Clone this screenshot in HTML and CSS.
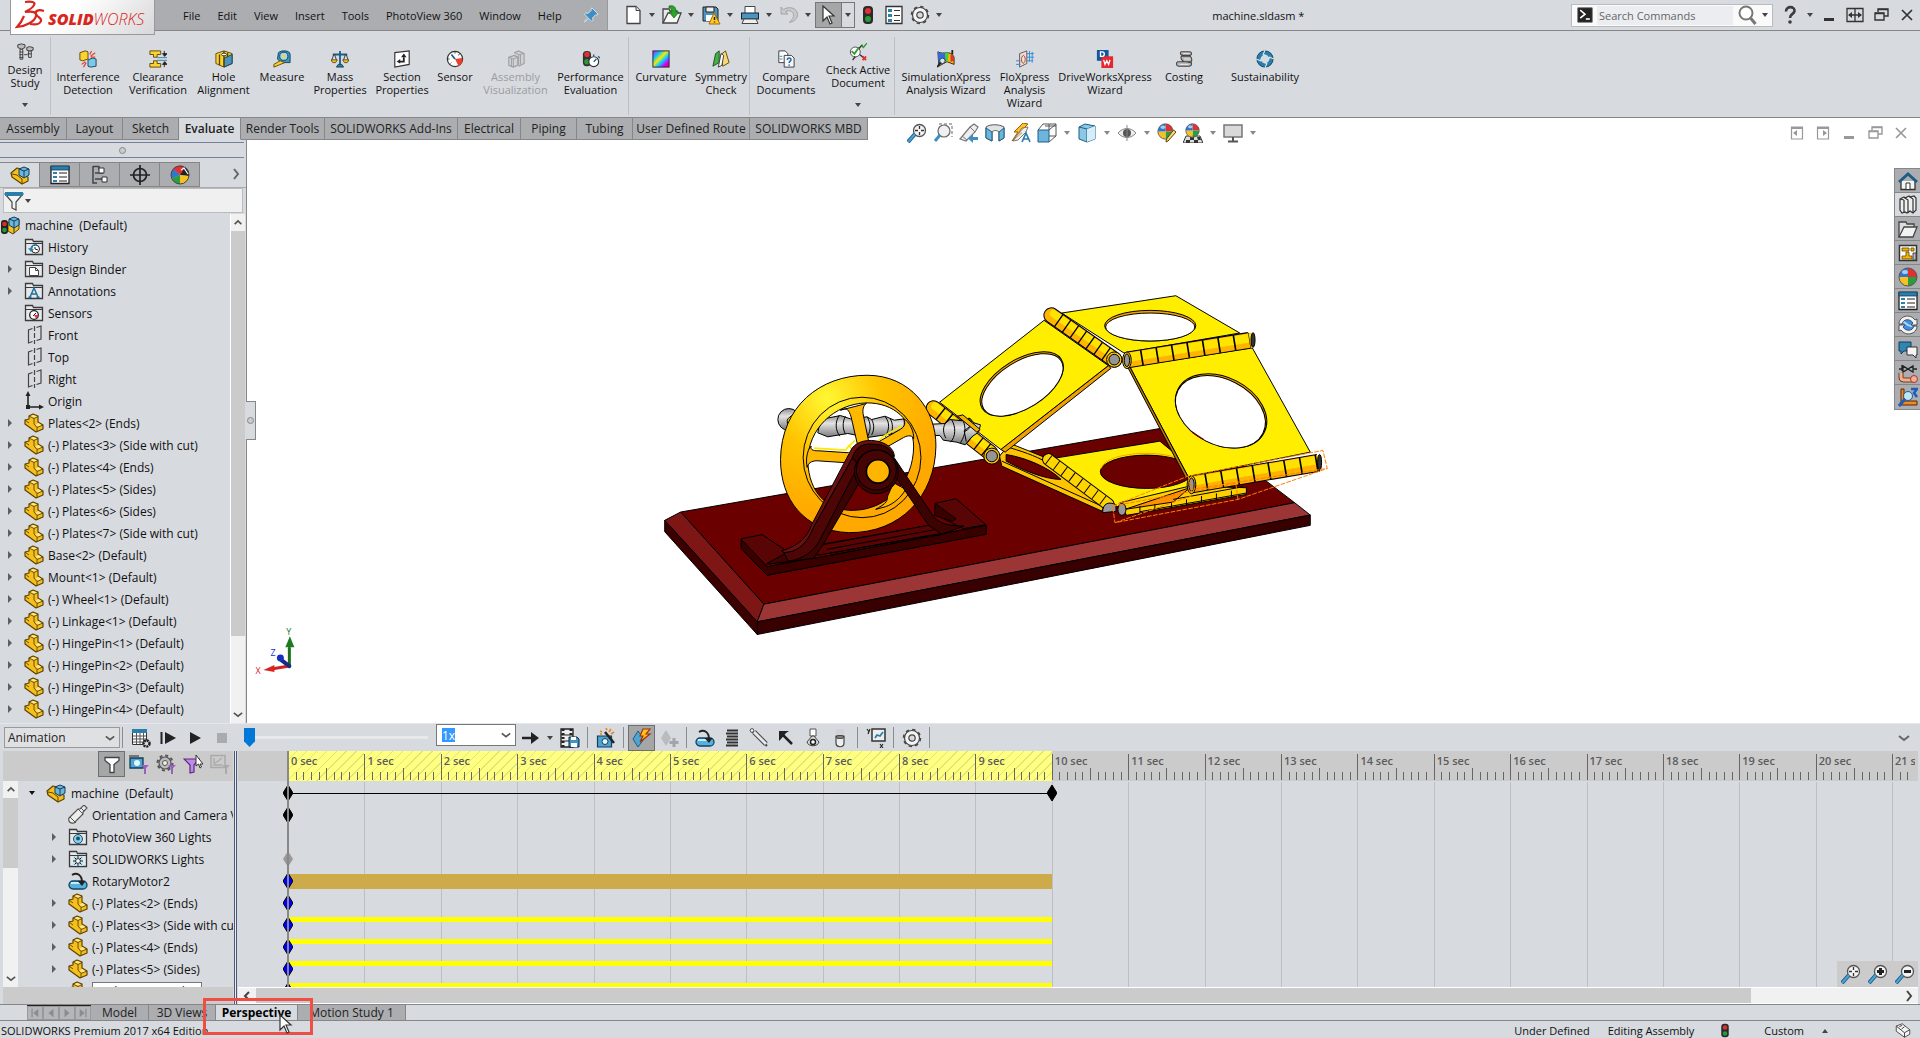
FILE: index.html
```html
<!DOCTYPE html>
<html lang="en">
<head>
  <meta charset="UTF-8">
  <title>machine.sldasm - SOLIDWORKS</title>
  <link rel="stylesheet" href="styles.css">
</head>
<body>

  <!-- Icon sprite -->
  <svg class="sprite" aria-hidden="true">
    <defs>
      <linearGradient id="g-rainbow" x1="0" y1="0" x2="1" y2="1">
        <stop offset="0" stop-color="#e0f"/><stop offset=".25" stop-color="#00c8ff"/><stop offset=".45" stop-color="#ffe600"/>
        <stop offset=".6" stop-color="#00d8ff"/><stop offset=".8" stop-color="#c0f"/><stop offset="1" stop-color="#f03"/>
      </linearGradient>
      <linearGradient id="g-steel" x1="0" y1="0" x2="0" y2="1">
        <stop offset="0" stop-color="#8c8c8c"/><stop offset=".35" stop-color="#e4e4e4"/><stop offset="1" stop-color="#777"/>
      </linearGradient>
      <radialGradient id="g-wheel" cx=".3" cy=".15" r=".75">
        <stop offset="0" stop-color="#fff833"/><stop offset=".45" stop-color="#ffc400"/><stop offset="1" stop-color="#ffa800"/>
      </radialGradient>
    </defs>

    <symbol id="caret" viewBox="0 0 8 8"><path d="M1 2h6L4 6z" fill="currentColor"/></symbol>
    <symbol id="caret-up" viewBox="0 0 8 8"><path d="M1 6h6L4 2z" fill="currentColor"/></symbol>
    <symbol id="tri" viewBox="0 0 8 8"><path d="M2 0l4 4-4 4z" fill="#5e5e5e"/></symbol>
    <symbol id="chev-d" viewBox="0 0 12 12"><path d="M1 4l5 4 5-4" fill="none" stroke="currentColor" stroke-width="2"/></symbol>
    <symbol id="chev-u" viewBox="0 0 12 12"><path d="M2 8l4-4 4 4" fill="none" stroke="currentColor" stroke-width="2"/></symbol>
    <symbol id="chev-r" viewBox="0 0 12 12"><path d="M4 1l4 5-4 5" fill="none" stroke="currentColor" stroke-width="2"/></symbol>
    <symbol id="chev-l" viewBox="0 0 12 12"><path d="M8 2L4 6l4 4" fill="none" stroke="currentColor" stroke-width="2"/></symbol>

    <symbol id="part" viewBox="0 0 20 20">
      <path d="M1 7l4-1V3l4-2 5 2v6l5 3v4l-7 3L1 11z" fill="#f5c01e" stroke="#5e4300" stroke-width="1.200" stroke-linejoin="round"/>
      <path d="M6 3.500L9 2l4 1.500L10.500 5zM11.500 11.500l3-1.500 3.500 2.500-3.500 1.500z" fill="#ffe78a"/>
      <path d="M5 3l5 2.500 4-2M10 5.500v5.500l3 3.500v4M13 14.500l6-2.500M1 7l4 3" fill="none" stroke="#5e4300" stroke-width=".9"/>
    </symbol>
    <symbol id="assembly" viewBox="0 0 20 20">
      <path d="M1 8l6-5 4 1v6l7 2v4l-6 3L2 12z" fill="#f5c01e" stroke="#5e4300" stroke-width="1.200" stroke-linejoin="round"/>
      <path d="M2 9l5 1 5 4v5" fill="none" stroke="#5e4300"/>
      <path d="M9 4l5-2 5 2v6l-5 3-5-3z" fill="#6db5dd" stroke="#123e5a" stroke-linejoin="round"/>
      <path d="M9 4l5 2 5-2M14 6v7" fill="none" stroke="#123e5a"/>
    </symbol>
    <symbol id="machine" viewBox="0 0 20 20">
      <path d="M8 8l4-5 7 2v9l-6 5-5-3z" fill="#f5c01e" stroke="#5e4300"/>
      <path d="M9 4l5-2 5 2v6l-5 3-5-3z" fill="#6db5dd" stroke="#123e5a"/><path d="M9 4l5 2 5-2M14 6v12" fill="none" stroke="#123e5a"/>
      <rect x="1" y="5" width="7" height="14" rx="3" fill="#222"/><circle cx="4.500" cy="9" r="2.300" fill="#e02a2a"/><circle cx="4.500" cy="15" r="2.300" fill="#269a32"/>
    </symbol>
    <symbol id="folder" viewBox="0 0 20 20"><path d="M1.500 17.500v-15h7l1 2h9v13z" fill="#e6e8ea" stroke="#3a3a3a" stroke-width="1.300"/><path d="M1.500 6.500h17" stroke="#3a3a3a"/></symbol>
    <symbol id="history" viewBox="0 0 20 20"><use href="#folder"/><circle cx="11.500" cy="12" r="4" fill="#fff" stroke="#222"/><path d="M11 10v2l3 1" stroke="#222" fill="none"/><path d="M4 11l3 4 3-3z" fill="#2d7fae"/><path d="M7 12c0-3 3-5 6-4" fill="none" stroke="#2d7fae" stroke-width="1.500"/></symbol>
    <symbol id="binder" viewBox="0 0 20 20"><use href="#folder"/><path d="M5.500 8.500h6l3 3v5h-9z" fill="#fff" stroke="#444"/><path d="M11.500 8.500v3h3" fill="none" stroke="#444"/></symbol>
    <symbol id="annot" viewBox="0 0 20 20"><use href="#folder"/><path d="M6 16l4-9 4 9M7.500 13h5M4.500 16.200h3M12.500 16.200h3" fill="none" stroke="#1f6f9f" stroke-width="1.500"/></symbol>
    <symbol id="sensorf" viewBox="0 0 20 20"><use href="#folder"/><circle cx="10" cy="12" r="4.300" fill="#fff" stroke="#222" stroke-width="1.300"/><path d="M9 13l3-3" stroke="#222"/><path d="M10 12h4a4 4 0 01-2 3.500z" fill="#e33"/></symbol>
    <symbol id="plane" viewBox="0 0 20 20"><path d="M8.500 3.500l-4 1.500v13l4-1.500M12.500 2.500l4.500-1.500v13l-4.500 1.500" fill="none" stroke="#444" stroke-width="1.200"/><path d="M10.500 1v18" stroke="#444" stroke-width="1.200" stroke-dasharray="5 2"/></symbol>
    <symbol id="origin" viewBox="0 0 20 20"><path d="M4 4v12h12" fill="none" stroke="#222" stroke-width="1.600"/><path d="M4 0l2.500 5h-5zM20 16l-5-2.500v5z" fill="#222"/><rect x="2" y="14" width="4" height="4" fill="#222"/></symbol>
    <symbol id="camera" viewBox="0 0 20 20"><path d="M1 13l9-9 2 0 4-4 3 3-4 4 0 2-9 9c-4 1-6-2-5-5z" fill="#eee" stroke="#555" stroke-width="1.200"/><path d="M10 4l5 5M2 12l6 6M13 3l3 3" stroke="#555"/></symbol>
    <symbol id="pvlight" viewBox="0 0 20 20"><use href="#folder"/><circle cx="10" cy="12" r="4.500" fill="#8fd0ee" stroke="#1d526f"/><circle cx="10" cy="11.500" r="2" fill="#1d526f"/></symbol>
    <symbol id="swlight" viewBox="0 0 20 20"><use href="#folder"/><path d="M5 7h10v10H5z" fill="#bfe6f8"/><circle cx="10" cy="12" r="2.400" fill="#fff" stroke="#222"/><path d="M10 7v2M10 15v2M5 12h2M13 12h2M6.500 8.500L8 10M12 14l1.500 1.500M13.500 8.500L12 10M8 14l-1.500 1.500" stroke="#222"/></symbol>
    <symbol id="motor" viewBox="0 0 20 20"><rect x="1" y="10" width="18" height="8" rx="4" fill="#58b0dc" stroke="#0f4666" stroke-width="1.300"/><path d="M3 12h9" stroke="#c9ecfb" stroke-width="2"/><path d="M4 4c5-3 10 0 10 7" fill="none" stroke="#222" stroke-width="2"/><path d="M9.500 10h8L14 15z" fill="#222"/></symbol>

    <symbol id="new" viewBox="0 0 20 20"><path d="M4 1.500h9l4 4v13H4z" fill="#fff" stroke="#444" stroke-width="1.300"/><path d="M13 1.500v4h4" fill="#ddd" stroke="#444"/></symbol>
    <symbol id="open" viewBox="0 0 20 20"><path d="M1 18V4h6l1 2h7v4" fill="#e8e8e8" stroke="#444" stroke-width="1.300"/><path d="M1 18l5-10h13l-4 10z" fill="#f7f7f7" stroke="#444" stroke-width="1.300"/><path d="M7 1c5-1 7 1 7 6h3l-5 6-5-6h3c0-3-1-4-3-4z" fill="#2aa52a" stroke="#136a13" stroke-width=".7"/></symbol>
    <symbol id="save" viewBox="0 0 20 20"><path d="M2 2h13l2 2v12H2z" fill="#4b94bf" stroke="#222"/><path d="M5 2h8v5H5z" fill="#eee" stroke="#222"/><path d="M5 10h8v6H5z" fill="#fff"/><path d="M13 8l6 11H8z" fill="#ffc928" stroke="#a66b00"/><path d="M13.500 12v3M13.500 16.500v1" stroke="#222" stroke-width="1.500"/></symbol>
    <symbol id="print" viewBox="0 0 20 20"><path d="M5 8V1.500h10V8" fill="#fff" stroke="#444"/><rect x="1.500" y="8" width="17" height="6" fill="#4b94bf" stroke="#123"/><path d="M4 14h12l2 4.500H2z" fill="#eee" stroke="#444"/></symbol>
    <symbol id="undo" viewBox="0 0 20 20"><path d="M2 2v7h7L6.500 6.500c4-2 9 0 8 5-.5 3-3 4-4 6 5-1 8-4 8-8 0-6-8-9-14-5z" fill="#c8cacc" stroke="#a2a4a6"/></symbol>
    <symbol id="pointer" viewBox="0 0 20 20"><path d="M5 1v15l4-4 3 7 2-1-3-7h5z" fill="#fff" stroke="#333" stroke-width="1.200"/></symbol>
    <symbol id="traffic" viewBox="0 0 20 20"><rect x="5" y="1" width="10" height="18" rx="4" fill="#2a2a2a"/><circle cx="10" cy="6" r="3" fill="#e13030"/><circle cx="10" cy="14" r="3" fill="#279b3a"/></symbol>
    <symbol id="list" viewBox="0 0 20 20"><path d="M2 1.500h16v17H2z" fill="#fff" stroke="#333" stroke-width="1.300"/><path d="M4 4h4v3H4zM4 9h4v3H4zM4 14h4v3H4z" fill="#2f7fae"/><path d="M10 5.500h6M10 10.500h6M10 15.500h6" stroke="#333"/></symbol>
    <symbol id="props" viewBox="0 0 20 20"><path d="M1 1.500h18v17H1z" fill="#fff" stroke="#222" stroke-width="1.300"/><path d="M1 1h18v4H1z" fill="#2c7eaa" stroke="#123e5a" stroke-width=".8"/><path d="M3 7h4v2H3zM3 11h4v2H3zM3 15h4v2H3z" fill="#2f7fae"/><path d="M9 8h8M9 12h8M9 16h8" stroke="#222" stroke-width="1.200"/></symbol>
    <symbol id="gear" viewBox="0 0 20 20"><circle cx="10" cy="10" r="7.500" fill="#f4f4f4" stroke="#444" stroke-width="1.200"/><circle cx="10" cy="10" r="8.500" fill="none" stroke="#444" stroke-width="1.500" stroke-dasharray="3.300 3.370"/><circle cx="10" cy="10" r="3.200" fill="#d7dadf" stroke="#444" stroke-width="1.200"/></symbol>
    <symbol id="pin" viewBox="0 0 20 20"><path d="M11 1l8 8-2 1-1-.5-4 4 .5 3-1.500 1.500L7 14l-5 5-.5-.5L6 13 2 9l1.500-1.500 3 .5 4-4-.5-1z" fill="#3b8dc2" stroke="#e8f2f8"/></symbol>
    <symbol id="lens" viewBox="0 0 20 20"><circle cx="9" cy="8" r="6.500" fill="#fff" stroke="#777" stroke-width="2"/><path d="M13.500 13l5 6" stroke="#777" stroke-width="3"/></symbol>
    <symbol id="prompt" viewBox="0 0 20 20"><path d="M1 1h18v18H1z" fill="#222" stroke="#555"/><path d="M4 4l6 5-6 5" fill="none" stroke="#fff" stroke-width="2"/><path d="M11 15h5" stroke="#fff" stroke-width="2"/></symbol>
    <symbol id="help" viewBox="0 0 20 20"><path d="M6 6.500c0-6 9-5.500 8.500-.5C14.200 9 10 9 10 13" fill="none" stroke="#3c3c3c" stroke-width="2.600"/><circle cx="10" cy="17" r="1.800" fill="#3c3c3c"/></symbol>
    <symbol id="min" viewBox="0 0 20 20"><path d="M5 13h10v3H5z" fill="currentColor"/></symbol>
    <symbol id="fit" viewBox="0 0 20 20"><path d="M2 3.500h16v13H2zM10 3v14M4 10h12" fill="none" stroke="currentColor" stroke-width="1.300"/><path d="M3 10l4-3v6zM17 10l-4-3v6z" fill="currentColor"/></symbol>
    <symbol id="restore" viewBox="0 0 20 20"><path d="M4 8h9v7H4zM7 7V4h10v7h-4" fill="none" stroke="currentColor" stroke-width="1.400"/><path d="M4 8.500h9M7 4.500h10" stroke="currentColor" stroke-width="1.500"/></symbol>
    <symbol id="close" viewBox="0 0 20 20"><path d="M5 5l10 10M15 5L5 15" stroke="currentColor" stroke-width="1.700"/></symbol>
    <symbol id="pane-l" viewBox="0 0 20 20"><path d="M4.500 4v12h11V4z" fill="none" stroke="currentColor" stroke-width="1.200"/><path d="M4 4h12v2H4zM10 7v6l-4-3z" fill="currentColor"/></symbol>
    <symbol id="pane-r" viewBox="0 0 20 20"><path d="M4.500 4v12h11V4z" fill="none" stroke="currentColor" stroke-width="1.200"/><path d="M4 4h12v2H4zM10 7v6l4-3z" fill="currentColor"/></symbol>

    <symbol id="study" viewBox="0 0 20 20"><path d="M2 2l4-1 4 1v3L6 7 2 5zM12 5l3-1 4 1v3l-4 1-3-1z" fill="#bbb" stroke="#333"/><path d="M4.500 7h3v11h-3zM14 9h3v7h-3z" fill="#ddd" stroke="#333"/><path d="M4 10h4M4 13h4M4 16h4M13 12h4M9 13h4" stroke="#333"/></symbol>
    <symbol id="interf" viewBox="0 0 20 20"><path d="M1 3l6-2 3 1v8l-6 2-3-1z" fill="#fbd22e" stroke="#5e4300"/><path d="M10 11l5-2 4 1v8l-6 1-3-1z" fill="#7cc9ec" stroke="#123e5a"/><path d="M12 5l2-4M13 7l5-4M13 8h5M7 13l-4 3M8 14l-3 5" stroke="#e8402c" stroke-width="1.300"/></symbol>
    <symbol id="clear" viewBox="0 0 20 20"><path d="M1 1h12v4H9v3H5V5H1zM5 12h4v3h4v4H1v-4h4z" fill="#fbd22e" stroke="#5e4300"/><path d="M9 8.500h11M9 11.500h11" stroke="#2f7fae"/><path d="M17 1v6M17 13v6M15 4h5l-2.500 3zM15 16h5l-2.500-3z" fill="#222" stroke="#222"/></symbol>
    <symbol id="hole" viewBox="0 0 20 20"><path d="M1 4l9-3 9 3v11l-9 4-9-4z" fill="#fbd22e" stroke="#5e4300"/><path d="M10 9l9-4v10l-9 4z" fill="#4b94bf" stroke="#123e5a"/><path d="M5 5v12M14 3v5M10 1v18" stroke="#5e4300" stroke-width="1.500"/><ellipse cx="10" cy="5" rx="3" ry="1.500" fill="#fff" stroke="#333"/></symbol>
    <symbol id="tape" viewBox="0 0 20 20"><path d="M6 3c3-3 13-3 13 2v9H9L5 10z" fill="#3d93c2" stroke="#123e5a"/><circle cx="12" cy="7" r="4.500" fill="#a9d8ef" stroke="#123e5a"/><circle cx="12" cy="7" r="1.800" fill="#fbd22e"/><path d="M8 12l-7 4v3l12-5z" fill="#fbd22e" stroke="#5e4300"/></symbol>
    <symbol id="scale" viewBox="0 0 20 20"><path d="M10 1v15M2 5h16" stroke="#1c5d87" stroke-width="2"/><path d="M6 19h8l-2-3H8z" fill="#2f7fae" stroke="#123e5a"/><path d="M3 5L1 11M4 5l2 6M16 5l-2 6M17 5l2 6" stroke="#333"/><path d="M0 11h7l-2 3H2zM13 11h7l-2 3h-3z" fill="#fbd22e" stroke="#5e4300"/></symbol>
    <symbol id="section" viewBox="0 0 20 20"><path d="M2 3l16-2v15L2 19z" fill="#fff" stroke="#333" stroke-width="1.300"/><path d="M7 13l5 0V8" fill="none" stroke="#222" stroke-width="2"/><path d="M12 4l3 4h-6zM4 13l4-3v5z" fill="#222"/></symbol>
    <symbol id="gauge" viewBox="0 0 20 20"><circle cx="10" cy="10" r="8.500" fill="#fff" stroke="#333" stroke-width="1.300"/><path d="M10 10l8-1a8 8 0 01-4 9z" fill="#e8402c"/><path d="M10 10L6 5" stroke="#1c5d87" stroke-width="2"/><path d="M10 2v2M2 10h2M5 15l1-1M15 4l-1 2" stroke="#333"/></symbol>
    <symbol id="visual" viewBox="0 0 20 20"><path d="M2 8l6-2 4 2v9l-5 2-5-2zM8 3l5-2 6 3v11l-6 3" fill="#d0d2d4" stroke="#9b9da0" stroke-width="1.200"/><path d="M2 8l5 2v9M7 10l5-2M13 5v12M8 3l5 2 6-1M5 9v9M15 5v11" fill="none" stroke="#9b9da0"/></symbol>
    <symbol id="perf" viewBox="0 0 20 20"><rect x="1" y="1" width="9" height="17" rx="4" fill="#333"/><circle cx="5.500" cy="5" r="3" fill="#e13030"/><circle cx="5.500" cy="13" r="3" fill="#279b3a"/><circle cx="13" cy="13" r="5.500" fill="#fff" stroke="#333" stroke-width="1.300"/><path d="M13 13l3-3M13 7V5M18 7l2 2" stroke="#1c5d87" stroke-width="1.500"/></symbol>
    <symbol id="curv" viewBox="0 0 20 20"><rect x="1" y="1" width="18" height="18" fill="url(#g-rainbow)" stroke="#223"/></symbol>
    <symbol id="symm" viewBox="0 0 20 20"><path d="M1 18l3-14 4-3v13z" fill="#47b047" stroke="#1a501a"/><path d="M10 5l5-4 4 13-7 4z" fill="#f5d978" stroke="#5e4300"/><path d="M7 19l3-15 3 2-2 11z" fill="#fff" stroke="#333"/></symbol>
    <symbol id="compare" viewBox="0 0 20 20"><path d="M2 1h7l3 3v10H2z" fill="#fff" stroke="#333"/><path d="M8 6h8l3 3v10H8z" fill="#f6f6f6" stroke="#333"/><path d="M3 7h3M3 10h3" stroke="#2f7fae"/><path d="M11.500 11c0-3 4.500-2.500 4 0-.2 1.500-2 1.500-2 3.500M13.500 16v1.500" fill="none" stroke="#1c6ea4" stroke-width="1.700"/></symbol>
    <symbol id="check" viewBox="0 0 20 20"><circle cx="7" cy="10" r="5.500" fill="#fff" stroke="#444"/><path d="M3 9l3 3 5-7" fill="none" stroke="#2b9d2b" stroke-width="2"/><path d="M11 6l4-4M12 13l4 3M7 15l-3 4" stroke="#333" stroke-width="1.500"/><path d="M14 3l2 2 4-5" fill="none" stroke="#2b9d2b" stroke-width="1.500"/><path d="M15 15l4 4M19 15l-4 4" stroke="#e13030" stroke-width="2"/></symbol>
    <symbol id="simx" viewBox="0 0 20 20"><path d="M1 2c6 4 14-3 18 6v8l-8-3-9 5z" fill="#ffb400" stroke="#222"/><path d="M1 2c5 3 6 1 8 1l1 9-8 5z" fill="#2e6de0"/><path d="M9 3h4l-1 10-2-1z" fill="#3fd13f"/><path d="M15 5c3 1 4 4 4 7l-4 1z" fill="#e13030"/><circle cx="6" cy="12" r="3" fill="#cfe8f7" stroke="#333"/><path d="M4 14l-4 5M17 0v5" stroke="#222" stroke-width="2"/></symbol>
    <symbol id="flox" viewBox="0 0 20 20"><path d="M4 4l8-3v14l-8 4z" fill="#f3d6d6" stroke="#555"/><path d="M8 6c-3 2-2 8 0 9 3-2 3-8 0-9z" fill="#d7f0c7" stroke="#b33"/><path d="M12 4h8M12 8h8M0 12h5M0 16h5M12 12h7M15 1v12M18 2v12" stroke="#2b8ad6"/></symbol>
    <symbol id="drive" viewBox="0 0 20 20"><path d="M1 0h13v12H1z" fill="#12569e"/><path d="M6 7h13v13H6z" fill="#e8262d"/><path d="M5 2v5h2c3 0 3-5 0-5zM8.500 11l1.500 5 2-4 2 4 1.500-5" fill="none" stroke="#fff" stroke-width="1.500"/></symbol>
    <symbol id="cost" viewBox="0 0 20 20"><path d="M7 2h9c3 0 3 3 1 4h-8C6 6 5 3 7 2zM7 7h9c3 0 3 5 2 6h-7c-4 0-5-5-4-6zM3 13h9l6 1c1 2 0 4-2 4H4c-3 0-3-4-1-5z" fill="#b5b5b5" stroke="#444" stroke-width="1.200"/><path d="M9 4h7M10 10h7M5 16h10" stroke="#eee"/></symbol>
    <symbol id="sust" viewBox="0 0 20 20"><circle cx="10" cy="10" r="7" fill="none" stroke="#2c7eaa" stroke-width="4.500"/><circle cx="10" cy="10" r="9" fill="none" stroke="#174c6a"/><path d="M10 0l-2 5 3 1M20 10l-5-2-1 3M10 20l2-5-3-1M0 10l5 2 1-3" fill="none" stroke="#d7e8f2" stroke-width="1.200"/></symbol>

    <symbol id="zoomfit" viewBox="0 0 20 20"><circle cx="12.500" cy="7.500" r="6" fill="#f4f4f4" stroke="#555" stroke-width="1.300"/><path d="M12.500 3v3M12.500 9v3M8 7.500h3M14 7.500h3" stroke="#333" stroke-width="1.300"/><path d="M8 11l-7 8" stroke="#1d5d85" stroke-width="4"/><path d="M8 11l-7 8" stroke="#4ba3d6" stroke-width="2"/></symbol>
    <symbol id="zoomin" viewBox="0 0 20 20"><circle cx="12.500" cy="7.500" r="6" fill="#f4f4f4" stroke="#555" stroke-width="1.300"/><path d="M12.500 4v7M9 7.500h7" stroke="#222" stroke-width="3"/><path d="M8 11l-7 8" stroke="#1d5d85" stroke-width="4"/><path d="M8 11l-7 8" stroke="#4ba3d6" stroke-width="2"/></symbol>
    <symbol id="zoomout" viewBox="0 0 20 20"><circle cx="12.500" cy="7.500" r="6" fill="#f4f4f4" stroke="#555" stroke-width="1.300"/><path d="M9 7.500h7" stroke="#222" stroke-width="3"/><path d="M8 11l-7 8" stroke="#1d5d85" stroke-width="4"/><path d="M8 11l-7 8" stroke="#4ba3d6" stroke-width="2"/></symbol>
    <symbol id="zoomarea" viewBox="0 0 20 20"><path d="M6 1h13v13" fill="none" stroke="#666" stroke-dasharray="3 2"/><circle cx="11" cy="8" r="6" fill="#f0f0f0" stroke="#666" stroke-width="1.200"/><path d="M7 12l-5 6" stroke="#3e8fc0" stroke-width="3"/></symbol>
    <symbol id="prevview" viewBox="0 0 20 20"><path d="M1 16L11 4l4-3 4 3-3 5L7 18z" fill="#eee" stroke="#777" stroke-width="1.200"/><path d="M11 4l5 5M3 13l5 4" stroke="#777"/><path d="M19 14v3h-5v3l-5-4.500L14 11v3z" fill="#3b8dc2"/></symbol>
    <symbol id="secview" viewBox="0 0 20 20"><path d="M1 4c4-3 13-3 18 0v11l-5 3V9c-2-2-5-2-7 0v9l-6-3z" fill="#dfe3e6" stroke="#555"/><path d="M1 5l6 4v9l-6-3zM19 5l-5 4v9l5-3z" fill="#6db5dd" stroke="#1d5d85"/></symbol>
    <symbol id="dynview" viewBox="0 0 20 20"><path d="M12 0L3 9h4l-6 9 10-8H8l9-9z" fill="#ffc21f" stroke="#a05a00"/><path d="M2 18l9-13 6-1-2 5-8 8z" fill="#e4e4e4" fill-opacity=".6" stroke="#777"/><path d="M11 19l4-9 4 9M12.500 16h5" fill="none" stroke="#2c7eaa" stroke-width="1.700"/></symbol>
    <symbol id="orient" viewBox="0 0 20 20"><path d="M1 7h11v12H1z" fill="#6db5dd" stroke="#1d5d85"/><path d="M1 7l5-6h13v12l-7 6M12 7l7-6M12 13h7M12 1v6M8 3h11" fill="none" stroke="#555"/></symbol>
    <symbol id="style" viewBox="0 0 20 20"><path d="M2 4l6-3 10 2v13l-8 3-8-3z" fill="#8cc8e6" stroke="#1d5d85"/><path d="M2 4l8 2 8-3M10 6v13" fill="none" stroke="#1d5d85"/><path d="M10 6l8-3v13l-8 3z" fill="#d6edf8"/></symbol>
    <symbol id="eye" viewBox="0 0 20 20"><path d="M1 10c5-6 13-6 18 0-5 6-13 6-18 0z" fill="#eee" stroke="#888"/><circle cx="10" cy="10" r="4" fill="#555"/><path d="M10 2v16" stroke="#888"/></symbol>
    <symbol id="ball" viewBox="0 0 20 20"><path d="M10 10V1a9 9 0 019 9z" fill="#e13030"/><path d="M10 10h9a9 9 0 01-9 9z" fill="#2a9d3c"/><path d="M10 10v9a9 9 0 01-9-9z" fill="#f8c21e"/><path d="M10 10H1a9 9 0 019-9z" fill="#2e76d2"/><circle cx="10" cy="10" r="9" fill="none" stroke="#555"/><ellipse cx="7" cy="5" rx="3" ry="2" fill="#fff" fill-opacity=".6"/></symbol>
    <symbol id="display" viewBox="0 0 20 20"><path d="M10 10L3 4a9 9 0 0112-2z" fill="#e13030"/><path d="M10 10l5-8a9 9 0 014 9z" fill="#222"/><path d="M10 10l9 1a9 9 0 01-9 8z" fill="#f8c21e"/><path d="M10 10v9a9 9 0 01-8-6z" fill="#2a9d3c"/><path d="M10 10l-8 3a9 9 0 011-9z" fill="#2e76d2"/><circle cx="10" cy="10" r="9" fill="none" stroke="#444"/><path d="M11 5l3-2 4 6" fill="none" stroke="#fff" stroke-width="1.200"/></symbol>
    <symbol id="appear" viewBox="0 0 20 20"><use href="#ball" width="17" height="17"/><path d="M19 9l-8 9-2 1 .5-3 7-9z" fill="#f5d978" stroke="#5e4300"/></symbol>
    <symbol id="scene" viewBox="0 0 20 20"><path d="M0 20l3-7h14l3 7z" fill="#ddd" stroke="#333"/><path d="M3 17h4v3H3zM11 17h4v3h-4zM14 14h3l1 3h-3zM7 14h4v3H7z" fill="#333"/><use href="#ball" x="2" width="15" height="15"/></symbol>
    <symbol id="monitor" viewBox="0 0 20 20"><path d="M1 2h18v12H1z" fill="#d9d9d9" stroke="#777" stroke-width="1.500"/><path d="M10 14v4M5 18.500h10" stroke="#555" stroke-width="2"/></symbol>

    <symbol id="tree-config" viewBox="0 0 20 20"><path d="M3 1.500h6M3 1v17h4M5 8h8M9 1v4M5 14h8" fill="none" stroke="#444" stroke-width="1.500"/><path d="M9 3h5v5H9zM12 12h5v5h-5z" fill="#fff" stroke="#333"/></symbol>
    <symbol id="target" viewBox="0 0 20 20"><circle cx="10" cy="10" r="6.500" fill="none" stroke="#222" stroke-width="1.700"/><path d="M10 0v20M0 10h20" stroke="#222" stroke-width="1.700"/></symbol>
    <symbol id="funnel" viewBox="0 0 20 20"><path d="M1 3h18l-7 8v8l-4-2v-6z" fill="#f4f4f4" stroke="#444" stroke-width="1.200"/><path d="M1 1h18v4H1z" fill="#2c7eaa"/></symbol>

    <symbol id="home" viewBox="0 0 20 20"><path d="M3 10v8.500h14V10" fill="#f4f4f4" stroke="#333" stroke-width="1.300"/><path d="M8 18v-6h4v6" fill="#fff" stroke="#333"/><path d="M1 11l9-8 9 8" fill="none" stroke="#1d5d85" stroke-width="3"/></symbol>
    <symbol id="books" viewBox="0 0 20 20"><path d="M2 4l4-2 1 1 4-2 1 1 4-1 2 2v12l-3 3-3-2-3 2-2-1-3 1-2-3z" fill="#f0f0f0" stroke="#333" stroke-width="1.200"/><path d="M6 5v13M7 3l3 2v13M12 2l3 2v13M2 4l4 1" fill="none" stroke="#333" stroke-width="1.200"/></symbol>
    <symbol id="openf" viewBox="0 0 20 20"><path d="M1 18V3h7l1 2h7v3" fill="#ddd" stroke="#444" stroke-width="1.300"/><path d="M1 18l5-10h13l-4 10z" fill="#f2f2f2" stroke="#444" stroke-width="1.300"/></symbol>
    <symbol id="palette" viewBox="0 0 20 20"><path d="M1.500 2.500h17v15h-17z" fill="#fff" stroke="#333" stroke-width="1.500"/><path d="M4 5h7v3H4zM13 5h3v3h-3zM8 9h3v4h3v3H4v-3h4z" fill="#f5b400" stroke="#5e4300" stroke-width=".8"/><path d="M15 10h3v7h-3z" fill="#bbb" stroke="#444"/></symbol>
    <symbol id="sync" viewBox="0 0 20 20"><circle cx="10" cy="10" r="7" fill="#3f8de0"/><path d="M4 6c4 1 5 6 10 5" stroke="#a6d8ff" stroke-width="2" fill="none"/><path d="M1 9c0-8 11-11 16-4l2-1v6h-6l2-2C12 3 5 4 4 9zM19 11c0 8-11 11-16 4l-2 1v-6h6l-2 2c3 5 10 4 11-1z" fill="#f2f2f2" stroke="#444" stroke-width=".9"/></symbol>
    <symbol id="chat" viewBox="0 0 20 20"><path d="M1 3h12v9H6l-3 3v-3H1z" fill="#2f86b5" stroke="#123e5a"/><path d="M9 8h10v8h-1v3l-3-3H9z" fill="#f4f4f4" stroke="#333"/></symbol>
    <symbol id="piping" viewBox="0 0 20 20"><path d="M1 6h4M15 6h4M5 3v6l10-6v6zM4 2v6" fill="none" stroke="#222" stroke-width="1.300"/><path d="M3 10v4c0 3 2 3 5 3h8" fill="none" stroke="#7a3b22" stroke-width="5"/><path d="M3 10v4c0 3 2 3 5 3h8" fill="none" stroke="#f0b18d" stroke-width="3"/><circle cx="16" cy="16" r="3.500" fill="#f0b18d" stroke="#a33"/></symbol>
    <symbol id="magmap" viewBox="0 0 20 20"><path d="M3 2h3v12h13v4H3z" fill="#e88b2d" stroke="#5e2300"/><path d="M13 2h6l-3 4 3 4" fill="none" stroke="#1d5db8" stroke-width="2.500"/><circle cx="10" cy="9" r="4.500" fill="#bfe3f7" stroke="#1d5d85"/><path d="M7 12l-6 7" stroke="#1d5db8" stroke-width="3"/></symbol>

    <symbol id="calc" viewBox="0 0 20 20"><path d="M1.500 1.500h14v15h-14z" fill="#fff" stroke="#333"/><path d="M1 1h15v4H1z" fill="#2c7eaa"/><path d="M2 8h13M2 11h13M2 14h13M5.500 5v11M9 5v11M12.500 5v11" stroke="#555"/><circle cx="15.500" cy="15.500" r="3" fill="#d7dadf" stroke="#222" stroke-width="2.500" stroke-dasharray="2 .8"/></symbol>
    <symbol id="playstart" viewBox="0 0 20 20"><path d="M3.500 4v12" stroke="#222" stroke-width="2"/><path d="M7 4l11 6-11 6z" fill="#222"/></symbol>
    <symbol id="play" viewBox="0 0 20 20"><path d="M5 4l11 6-11 6z" fill="#222"/></symbol>
    <symbol id="stop" viewBox="0 0 20 20"><path d="M5 5h10v10H5z" fill="#a9abae"/></symbol>
    <symbol id="arrow" viewBox="0 0 20 20"><path d="M2 10h11" stroke="#222" stroke-width="2.500"/><path d="M11 4l8 6-8 6z" fill="#222"/></symbol>
    <symbol id="film" viewBox="0 0 20 20"><path d="M1 1h12v18H1z" fill="#eee" stroke="#222" stroke-width="1.300"/><path d="M3 1v18M11 1v18" stroke="#222" stroke-width="3" stroke-dasharray="2 2"/><path d="M1 7h12M1 13h12" stroke="#222"/><path d="M9 9h8l2 2v8H9z" fill="#3f94c4" stroke="#123"/><path d="M11 9h5v3h-5zM11 15h6v4h-6z" fill="#fff"/></symbol>
    <symbol id="wizard" viewBox="0 0 20 20"><path d="M1.500 8h14v11h-14z" fill="#4ea4d2" stroke="#123e5a" stroke-width="1.200"/><circle cx="9" cy="13.500" r="3" fill="#e2f4fc" stroke="#123e5a"/><path d="M9 4l9 11" stroke="#222" stroke-width="2.500"/><path d="M4 3l2 1M10 0l1 2M15 1l-2 3M4 6h2M18 4l-3 2" stroke="#e8862c" stroke-width="1.700"/></symbol>
    <symbol id="autokey" viewBox="0 0 20 20"><path d="M6 3l6 8-6 8-5-8z" fill="#4ea4d2" stroke="#1d5d85"/><path d="M11 1h7l-4 5h4L8 14l3-6H8z" fill="#ffc21f" stroke="#a0300a" stroke-width="1.200"/></symbol>
    <symbol id="addkey" viewBox="0 0 20 20"><path d="M7 2l5 8-5 8-5-8z" fill="#b9bbbe"/><path d="M15 10v9M10.500 14.500h9" stroke="#a3a5a8" stroke-width="3"/></symbol>
    <symbol id="spring" viewBox="0 0 20 20"><path d="M5 2.500h11M4 5.500h12M5 8.500h11M4 11.500h12M5 14.500h11M4 17.500h12" stroke="#333" stroke-width="2"/></symbol>
    <symbol id="damper" viewBox="0 0 20 20"><path d="M2 2l6 6M12 12l6 6" stroke="#444" stroke-width="2"/><path d="M5 4l12 12" stroke="#444" stroke-width="5"/><path d="M5 4l12 12" stroke="#e8e8e8" stroke-width="3"/><circle cx="3" cy="2.500" r="1.800" fill="#fff" stroke="#444"/></symbol>
    <symbol id="force" viewBox="0 0 20 20"><path d="M5 5l11 11" stroke="#222" stroke-width="2.500"/><path d="M3 3h10l-3 2-5 6-2 2z" fill="#222"/></symbol>
    <symbol id="contact" viewBox="0 0 20 20"><path d="M7 1h6v7H7z" fill="#fff" stroke="#555"/><path d="M9 8l-5 6c1 5 11 5 12 0l-5-6z" fill="#ddd" stroke="#444"/><circle cx="10" cy="14" r="2.500" fill="#fff" stroke="#222" stroke-width="1.500"/></symbol>
    <symbol id="gravity" viewBox="0 0 20 20"><path d="M6 1h8v6H6z" fill="#c9c9c9" fill-opacity=".5"/><path d="M6 8h8v7c0 5-8 5-8 0z" fill="#eee" stroke="#444" stroke-width="1.200"/><ellipse cx="10" cy="9" rx="4" ry="1.500" fill="#888" stroke="#444"/></symbol>
    <symbol id="plot" viewBox="0 0 20 20"><path d="M6 1h13v12H6z" fill="#eee" stroke="#333" stroke-width="1.500"/><path d="M9 10l2-3 3 1 3-4" stroke="#2c7eaa" stroke-width="1.800" fill="none"/><path d="M1 1l2 3M4 1L2 6M14 16l3 4M17 16l-3 4" stroke="#222" stroke-width="1.100"/></symbol>
    <symbol id="funnel-w" viewBox="0 0 20 20"><path d="M3 3.500h14v3l-5 4v8H8v-8l-5-4z" fill="#fff" stroke="#444" stroke-width="1.300"/></symbol>
    <symbol id="f-anim" viewBox="0 0 20 20"><path d="M1 4h13v10H1z" fill="#4ea4d2" stroke="#123e5a" stroke-width="1.300"/><path d="M0 2h10" stroke="#222"/><circle cx="8" cy="9" r="3" fill="#e2f4fc"/><path d="M12 11h8l-3 3v6h-2v-6z" fill="#9a5fc0"/></symbol>
    <symbol id="f-drive" viewBox="0 0 20 20"><circle cx="9" cy="9" r="6" fill="#bbb" stroke="#555" stroke-width="1.200"/><circle cx="9" cy="9" r="7.500" fill="none" stroke="#555" stroke-width="2" stroke-dasharray="3 2.890"/><circle cx="9" cy="9" r="2.500" fill="#eee" stroke="#555"/><path d="M12 11h8l-3 3v6h-2v-6z" fill="#9a5fc0"/></symbol>
    <symbol id="f-sel" viewBox="0 0 20 20"><path d="M1 5h15l-5 6v7l-4 1v-8z" fill="#c18be6" stroke="#5b2a80" stroke-width="1.200"/><path d="M13 1v11l2.500-2 1.500 4 1.500-1-1.500-3h3z" fill="#fff" stroke="#333"/></symbol>
    <symbol id="f-res" viewBox="0 0 20 20"><path d="M1 1.500h14v12H1z" fill="none" stroke="#aaa" stroke-width="1.500"/><path d="M4 4v7h8M5 9l3-2 4-3" fill="none" stroke="#aaa" stroke-width="1.300"/><path d="M12 11h8l-3 3v6h-2v-6z" fill="#aaa"/></symbol>
    <symbol id="first" viewBox="0 0 12 12"><path d="M2.500 1v10" stroke="currentColor" stroke-width="1.500"/><path d="M10 1v10L4 6z" fill="currentColor"/></symbol>
    <symbol id="back" viewBox="0 0 12 12"><path d="M9 1v10L3 6z" fill="currentColor"/></symbol>
    <symbol id="next" viewBox="0 0 12 12"><path d="M3 1v10l6-5z" fill="currentColor"/></symbol>
    <symbol id="last" viewBox="0 0 12 12"><path d="M9.500 1v10" stroke="currentColor" stroke-width="1.500"/><path d="M2 1v10l6-5z" fill="currentColor"/></symbol>
    <symbol id="tag" viewBox="0 0 20 20"><path d="M1 4l8-3 10 8v6l-7 4L1 11z" fill="#f4f4f4" stroke="#444" stroke-width="1.200"/><path d="M1 4l11 9 7-4M12 13v6M5 5l4-2M8 8l4-3" fill="none" stroke="#444" stroke-width="1.300"/></symbol>
  </svg>

  <!-- Title bar -->
  <header class="titlebar">
    <div class="logo">
      <svg class="logo-mark" viewBox="0 0 30 34"><path d="M10 2c6-1 11 0 9 3-1 3-5 5-9 7 8-1 12 0 11 4-1 5-9 10-19 11 3-3 5-6 7-11" fill="none" stroke="#d8261c" stroke-width="2.200"/><path d="M29 11c-6-2-9 0-8 3s6 4 5 7c-1 3-5 4-11 3" fill="none" stroke="#d8261c" stroke-width="2.200"/></svg>
      <span class="logo-text"><b>SOLID</b>WORKS</span>
    </div>
    <nav class="menubar">
      <button>File</button><button>Edit</button><button>View</button><button>Insert</button><button>Tools</button>
      <button>PhotoView 360</button><button>Window</button><button>Help</button>
      <svg class="pin"><use href="#pin"/></svg>
    </nav>
    <div class="quick" data-icons="new v open v save v print v undo v"></div>
    <div class="select-tool"><button aria-label="Select"><svg class="icon"><use href="#pointer"/></svg></button><button class="drop" aria-label="Select options"><svg class="caret"><use href="#caret"/></svg></button></div>
    <div class="quick quick-end" data-icons="traffic list gear v"></div>
    <h1 class="doc-title">machine.sldasm *</h1>
    <label class="search">
      <svg class="prompt"><use href="#prompt"/></svg>
      <input type="text" placeholder="Search Commands" aria-label="Search Commands">
      <svg class="icon"><use href="#lens"/></svg>
      <svg class="caret"><use href="#caret"/></svg>
    </label>
    <div class="window-controls" data-icons="help v min fit restore close"></div>
  </header>

  <!-- Command ribbon, filled by script.js -->
  <section class="ribbon" id="ribbon"></section>

  <main class="workspace">
    <nav class="command-tabs">
      <button>Assembly</button><button>Layout</button><button>Sketch</button><button class="active">Evaluate</button><button>Render Tools</button><button>SOLIDWORKS Add-Ins</button><button>Electrical</button><button>Piping</button><button>Tubing</button><button>User Defined Route</button><button>SOLIDWORKS MBD</button>
    </nav>

    <aside class="manager">
      <div class="grip"><i class="dot"></i></div>
      <div class="manager-tabs">
        <button class="active" aria-label="Feature tree"><svg class="icon"><use href="#assembly"/></svg></button>
        <button aria-label="Properties"><svg class="icon"><use href="#props"/></svg></button>
        <button aria-label="Configurations"><svg class="icon"><use href="#tree-config"/></svg></button>
        <button aria-label="Dimensions"><svg class="icon"><use href="#target"/></svg></button>
        <button aria-label="Display"><svg class="icon"><use href="#display"/></svg></button>
        <svg class="more"><use href="#chev-r"/></svg>
      </div>
      <div class="filter">
        <button aria-label="Filter"><svg class="icon"><use href="#funnel"/></svg><svg class="caret"><use href="#caret"/></svg></button>
        <input type="text" aria-label="Filter text">
      </div>
      <div class="tree-wrap">
        <ul class="tree" id="featureTree"></ul>
        <div class="vscroll"><svg><use href="#chev-u"/></svg><i class="thumb"></i><svg><use href="#chev-d"/></svg></div>
      </div>
    </aside>

    <section class="viewport">
      <svg class="scene" viewBox="247 140 1673 584">
        <!-- units inside the group are thirds of a pixel -->
        <g transform="translate(640 280) scale(.33333)" stroke="#000" stroke-width="3" stroke-linejoin="round">
          <!-- base -->
          <path d="M120 698L1652 431 1965 670 370 975z" fill="#6a0000"/>
          <path d="M120 698L370 975 350 1028 72 723z" fill="#7e1616"/>
          <path d="M370 975L1965 670 2012 707 350 1028z" fill="#9c3636"/>
          <path d="M350 1028L2012 707V738L350 1066z" fill="#380000"/>
          <path d="M72 723L350 1028V1066L72 757z" fill="#3c0000"/>

          <!-- shaft -->
          <g fill="url(#g-steel)">
            <path d="M540 420l60-12 30 10 50-6 14 8 40-10 28 12 30-4v40l-70 10-40 6-60-12-60 10-30-12z"/>
            <path d="M596 408c-12 20-12 42 2 62M615 410c-10 20-8 38 0 54M680 412c12 18 12 40 2 58M694 420c8 16 8 30 0 46M735 412c14 18 12 38 0 60M750 418c8 14 8 30 2 46" fill="none"/>
            <circle cx="445" cy="420" r="33"/>
          </g>
          <path d="M440 422c8-14 24-20 34-16l-16 52-16-10z" fill="#ffd800"/>

          <!-- plate with cut, seen from the edge -->
          <path d="M1078 530L1110 492 1230 540 1405 660 1385 695 1085 560z" fill="#ffc400"/>
          <path d="M1098 525c60 10 130 40 165 75-50 0-120-30-165-55z" fill="#6a0000"/>
          <path d="M1110 505c50 15 90 30 120 50M1085 545l300 135" fill="none"/>

          <!-- lower plate -->
          <path d="M1245 536L1560 485 1700 600 1770 625 1420 684z" fill="#ffec00"/>
          <ellipse cx="1520" cy="577" rx="139" ry="50" fill="#6a0000"/>
          <path d="M1382 568c20-60 230-60 270-10" fill="none" stroke="#f9a500"/>
          <g fill="none">
            <path d="M1225 540L1405 675" stroke-width="38" stroke-linecap="round"/>
            <path d="M1225 540L1405 675" stroke="#ffd500" stroke-width="32" stroke-linecap="round"/>
            <path d="M1225 540L1405 675" stroke-width="32" stroke-dasharray="3 26"/>
          </g>
          <path d="M1388 700c0-30 20-34 40-24v20z" fill="#999"/>

          <!-- folded bottom row -->
          <path d="M1440 670L1650 620 1820 625 1820 645 1460 708z" fill="#ffd000"/>
          <path d="M1455 690L1650 625 1600 668z" fill="#ff9000"/>
          <path d="M1600 660L1810 622M1500 697l320-56M1500 680v22M1545 675v20M1595 668v20M1640 660v20M1685 650v20M1730 642v20M1775 634v20" fill="none"/>
          <ellipse cx="1446" cy="690" rx="12" ry="18" fill="#999"/>

          <!-- left plate -->
          <path d="M1082 510L1405 258l8 8-318 252z" fill="#f0a000"/>
          <path fill-rule="evenodd" d="M898 368L1212 122 1405 258 1082 510z" fill="#ffee00"/>
          <ellipse cx="1145" cy="313" rx="140" ry="73" transform="rotate(-32 1145 313)" fill="#f0a000"/>
          <ellipse cx="1147" cy="316" rx="137" ry="70" transform="rotate(-32 1147 316)" fill="#fff"/>
          <!-- top plate -->
          <path d="M1265 100L1608 48 1800 160 1452 220z" fill="#ffee00"/>
          <ellipse cx="1531" cy="138" rx="137" ry="46" fill="#f0a000"/>
          <ellipse cx="1531" cy="142" rx="134" ry="42" fill="#fff"/>
          <!-- right plate -->
          <path fill="#ffee00" d="M1470 262L1838 205 2012 518 1645 592z"/>
          <path d="M1470 262L1645 592l-8 2L1464 264z" fill="#b87800"/>
          <ellipse cx="1744" cy="394" rx="145" ry="101" transform="rotate(27 1744 394)" fill="#f0a000"/>
          <ellipse cx="1742" cy="397" rx="143" ry="98" transform="rotate(27 1742 397)" fill="#fff"/>
          <path d="M1657 458l34 22" stroke="#6a0000" stroke-width="4"/>

          <!-- hinges -->
          <g fill="none">
            <path d="M1234 107L1423 240" stroke-width="48" stroke-linecap="round"/>
            <path d="M1234 107L1423 240" stroke="#ffb400" stroke-width="42" stroke-linecap="round"/>
            <path d="M1240 102L1427 232" stroke="#ffe400" stroke-width="22" stroke-linecap="round"/>
            <path d="M1234 107L1423 240" stroke-width="44" stroke-dasharray="0 25 4 0"/>

            <path d="M1462 241L1828 182" stroke-width="50"/>
            <path d="M1462 241L1838 181" stroke="#ffb400" stroke-width="44"/>
            <path d="M1462 234L1838 174" stroke="#ffe400" stroke-width="26"/>
            <path d="M1462 241L1830 182" stroke-width="46" stroke-dasharray="0 42 5 0"/>

            <path d="M1655 615L2036 550" stroke-width="54"/>
            <path d="M1655 615L2036 550" stroke="#ffb000" stroke-width="48"/>
            <path d="M1655 606L2036 541" stroke="#ffe000" stroke-width="26"/>
            <path d="M1655 615L2036 550" stroke-width="50" stroke-dasharray="0 43 5 0"/>

            <path d="M880 386L1050 520" stroke-width="48" stroke-linecap="round"/>
            <path d="M880 386L1050 520" stroke="#ffb400" stroke-width="42" stroke-linecap="round"/>
            <path d="M884 380L1054 514" stroke="#ffe400" stroke-width="22" stroke-linecap="round"/>
            <path d="M880 386L1050 520" stroke-width="44" stroke-dasharray="0 25 4 0"/>
          </g>
          <g fill="#959595">
            <circle cx="1423" cy="240" r="23" fill="#ffc400"/><circle cx="1423" cy="240" r="16"/>
            <ellipse cx="1461" cy="242" rx="13" ry="25" fill="#ffc400"/><ellipse cx="1461" cy="242" rx="8" ry="19"/>
            <ellipse cx="1655" cy="616" rx="13" ry="27" fill="#ffb000"/><ellipse cx="1655" cy="616" rx="8" ry="20"/>
            <circle cx="1055" cy="530" r="24" fill="#ffc400"/><circle cx="1055" cy="530" r="17"/>
            <ellipse cx="1840" cy="181" rx="6" ry="22" fill="#333"/><ellipse cx="2040" cy="549" rx="6" ry="24" fill="#333"/>
          </g>

          <!-- linkage end -->
          <g fill="url(#g-steel)">
            <path d="M875 434l40-2 14-12 40 4 20-8 12 14 20 6-6 22-20 14-20 24-26-8-40-6-10-14h-32z"/>
            <path d="M915 432c-8 14-6 30 2 44M935 422c12 20 12 50-4 66M969 424c8 20 8 40-8 66M1002 430l-30 24 6 32M985 416c14 8 14 28-12 40" fill="none"/>
            <path d="M952 410l16-4 52 44-10 8z" fill="#f0b000"/>
          </g>

          <!-- wheel -->
          <path fill-rule="evenodd" fill="url(#g-wheel)" d="M420 540C422 380 540 287 680 287 810 287 888 390 887 500 885 650 780 762 625 760 490 755 420 660 420 540zM502 545C505 640 560 695 640 693 740 690 820 610 820 500 818 420 760 370 680 370 580 372 502 450 502 545z"/>
          <ellipse cx="665" cy="534" rx="177" ry="181" fill="none"/>
          <g fill="#ffb800">
            <path d="M600 392c20-10 26 0 32 20l20 86 34-6-18-90c-2-18 4-26 10-30z"/>
            <path d="M512 500c-4 14 12 14 24 14l90 6-6 30-90-6c-18 0-28 8-30 20-4-20-2-50 12-64z"/>
            <path d="M790 418c8 18 0 26-14 34l-70 40 24 16 60-34c14-8 28-6 30 4 2-20-12-52-30-60z"/>
            <path d="M760 610l36 20c-14 24-34 42-60 52l-30 8c24-14 36-20 36-40z"/>
          </g>
          <path d="M520 506l96 6 10-14 10 14-14 14M700 500c20-30 50-40 84-60M620 505l24-22" fill="none" stroke="#ffe800" stroke-width="5"/>

          <!-- mount -->
          <path fill="#5a0505" d="M885 672l62-14 90 78-68 12-84-42z"/>
          <path fill="#3a0000" d="M885 672l62 46-10 8-54-18z"/>
          <path fill="#5a0505" d="M302 778l63-12 78 52 82-20 345-60 60 25 108-26v27L380 888 302 808z"/>
          <path fill="#3a0000" d="M380 862L1038 738v27L380 888 302 808V780z"/>
          <path fill="#3c0303" fill-rule="evenodd" d="M380 852L443 818c36-6 66-30 80-74L635 538c6-66 110-70 126-4l118 176c20 26 54 30 92 30l-66 25-385 72-140 18zM548 796L655 612c22 34 92 30 112-18l98 144z"/>
          <path fill="#6a1010" d="M430 820c46 0 74-28 90-76L636 535c10-34 34-46 70-40 26 0 44 12 56 36 0-50-108-70-132-16L514 735c-14 40-40 64-90 80z"/>
          <path fill="#4e0505" d="M443 845c40-2 80-28 100-72L655 556l-19-20L520 742c-20 50-46 76-90 78z"/>
          <path fill="#5a0303" d="M548 796l317-58 40 27-385 72z"/>
          <path d="M530 828l370-65M570 822l300-54M560 810l320-58" fill="none"/>
          <circle cx="708" cy="577" r="66" fill="#3c0202"/>
          <circle cx="708" cy="572" r="60" fill="#450505"/>
          <circle cx="713" cy="576" r="35" fill="#ffb400" stroke-width="5"/>

          <!-- selection box -->
          <path d="M1418 680L1645 590 2050 513 2063 567 1795 660 1425 730zM1645 590l10 40 408-63M1418 680l370-68 7 48M1425 730L1655 650" fill="none" stroke="#ff7f00" stroke-dasharray="14 4"/>
        </g>

        <!-- coordinate triad -->
        <g stroke-linecap="round">
          <path d="M288 667v-18" stroke="#1d701d" stroke-width="3"/><path d="M284 648h9l-4.500-11z" fill="#1d7a1d"/>
          <path d="M288 667l-18 3" stroke="#c22" stroke-width="3"/><path d="M273 666v7l-11-2z" fill="#d22"/>
          <path d="M288 667l-8-6" stroke="#1a2a80" stroke-width="4"/><circle cx="279" cy="659" r="3.500" fill="#1530c0"/>
        </g>
        <text class="axis axis-y" x="285" y="636">Y</text>
        <text class="axis axis-x" x="254" y="675">X</text>
        <text class="axis axis-z" x="269" y="657">Z</text>
      </svg>
      <button class="splitter" aria-label="Collapse panel"><i class="dot"></i></button>
      <div class="taskpane" data-icons="home books openf palette ball props sync chat piping magmap"></div>
    </section>

    <div class="view-tools" data-icons="zoomfit zoomarea prevview secview dynview orient v style v eye v appear scene v monitor v"></div>
    <div class="doc-controls" data-icons="pane-l pane-r min restore close"></div>
  </main>

  <!-- Motion study -->
  <section class="motion-bar">
    <div class="combo type"><select aria-label="Study type"><option>Animation</option></select><svg><use href="#chev-d"/></svg></div>
    <i class="sep tight"></i>
    <div class="icons" data-icons="calc playstart play stop"></div>
    <input class="time" type="range" min="0" max="100" value="0" aria-label="Time">
    <div class="combo speed"><input type="text" value="1x" aria-label="Playback speed"><svg><use href="#chev-d"/></svg></div>
    <div class="icons" data-icons="arrow v film | wizard | autokey* addkey | motor spring damper force contact gravity | plot | gear |"></div>
    <button class="collapse" aria-label="Collapse"><svg><use href="#chev-d"/></svg></button>
  </section>

  <section class="motion">
    <div class="motion-left">
      <div class="filters" data-icons="funnel-w* f-anim f-drive f-sel f-res"></div>
      <div class="motion-tree">
        <div class="vscroll"><svg><use href="#chev-u"/></svg><i class="thumb"></i><svg><use href="#chev-d"/></svg></div>
        <ul class="tree" id="motionTree"></ul>
      </div>
      <div class="motion-foot"></div>
    </div>
    <div class="divider"></div>
    <div class="timeline">
      <div class="ruler"><div class="seconds" id="seconds"></div></div>
      <div class="tracks">
        <div class="gridlines" id="gridlines"></div>
        <div id="rows"></div>
        <div class="zoom-tools" data-icons="zoomfit zoomin zoomout"></div>
      </div>
      <i class="playhead"></i>
      <div class="hscroll"><svg><use href="#chev-l"/></svg><i class="thumb"></i><svg><use href="#chev-r"/></svg></div>
    </div>
  </section>

  <nav class="study-tabs">
    <div class="steps">
      <button disabled aria-label="First"><svg><use href="#first"/></svg></button>
      <button disabled aria-label="Previous"><svg><use href="#back"/></svg></button>
      <button disabled aria-label="Next"><svg><use href="#next"/></svg></button>
      <button disabled aria-label="Last"><svg><use href="#last"/></svg></button>
    </div>
    <button class="tab">Model</button><button class="tab">3D Views</button><button class="tab active">Perspective</button><button class="tab">Motion Study 1</button>
    <div class="callout"></div>
    <svg class="mouse"><use href="#pointer"/></svg>
  </nav>

  <footer class="status">
    <span class="edition">SOLIDWORKS Premium 2017 x64 Edition</span>
    <span>Under Defined</span>
    <span>Editing Assembly</span>
    <svg class="light"><use href="#traffic"/></svg>
    <button>Custom <svg class="caret"><use href="#caret-up"/></svg></button>
    <svg class="tag"><use href="#tag"/></svg>
  </footer>

  <script src="script.js"></script>
</body>
</html>
```

FILE: styles.css
```css
* { box-sizing: border-box; }

body {
  margin: 0;
  height: 100vh;
  display: flex;
  flex-direction: column;
  overflow: hidden;
  background: #d7dadf;
  color: #111;
  font-family: "Open Sans", "Noto Sans", sans-serif;
  font-size: 12px;
}

button, input, select { font: inherit; color: inherit; }
button { border: 0; padding: 0; background: none; }
ul { list-style: none; margin: 0; padding: 0; }
.sprite { position: absolute; width: 0; height: 0; }
.icon { width: 20px; height: 20px; display: block; }
.caret { width: 8px; height: 8px; display: block; color: #444; }
.dot { width: 7px; height: 7px; border: 1px solid #888; border-radius: 50%; background: #ccc; }

/* Rows of icon buttons */
[data-icons] { display: flex; align-items: center; }
.btn { width: 26px; height: 26px; display: flex; align-items: center; justify-content: center; }
.btn.on { background: #a5a6a8; border: 1px solid #6f6f6f; }
.drop { width: 13px; height: 26px; display: flex; align-items: center; justify-content: center; }

/* Title bar */
.titlebar {
  height: 31px;
  flex: none;
  display: flex;
  align-items: center;
  border-bottom: 1px solid #868686;
}
.logo {
  align-self: flex-start;
  position: relative;
  z-index: 2;
  width: 145px;
  height: 35px;
  margin-left: 10px;
  flex: none;
  display: flex;
  align-items: center;
  border: 1px solid #999;
  border-top: 0;
  background: linear-gradient(135deg, #fff 40%, #d8d8da);
}
.logo-mark { width: 30px; height: 34px; flex: none; margin: 0 3px 0 4px; }
.logo-text { padding-top: 4px; color: #d8261c; font-size: 16px; font-style: italic; font-weight: 300; }
.logo-text b { font-weight: 800; }
.menubar {
  align-self: stretch;
  display: flex;
  align-items: center;
  gap: 17px;
  padding: 0 8px 0 28px;
  background: #abadb0;
  border-right: 1px solid #999;
  font-size: 11px;
}
.pin { width: 16px; height: 16px; margin: 0 0 0 4px; }
.quick { padding-left: 12px; }
.quick-end { padding-left: 0; }
.select-tool { display: flex; border: 1px solid #777; height: 26px; }
.select-tool button { width: 25px; display: flex; align-items: center; justify-content: center; background: #a5a6a8; }
.select-tool .drop { width: 13px; height: auto; background: none; border-left: 1px solid #777; }
.doc-title { flex: 1; margin: 0; text-align: center; font-size: 11px; font-weight: 400; }
.search {
  width: 202px;
  height: 23px;
  display: flex;
  align-items: center;
  gap: 4px;
  padding: 0 3px 0 5px;
  background: #fafafa;
  border: 1px solid #bbb;
}
.search .prompt { width: 16px; height: 16px; flex: none; }
.search input { flex: 1; min-width: 0; height: 19px; border: 0; padding: 0 2px; background: #ebedf0; font-size: 11px; }
.search input::placeholder { color: #666; opacity: 1; }
.window-controls { padding-left: 4px; color: #333; }

/* Ribbon */
.ribbon {
  height: 87px;
  flex: none;
  display: grid;
  grid-template-columns: 51px 74px 66px 65px 52px 64px 60px 46px 75px 76px 64px 57px 72px 73px 102px 55px 106px 52px 110px;
  padding: 6px 0 2px;
  border-bottom: 1px solid #868686;
}
.cmd {
  display: flex;
  flex-direction: column;
  align-items: center;
  padding-top: 13px;
  white-space: nowrap;
  font-size: 11px;
  line-height: 13px;
}
.cmd .icon { width: 18px; height: 18px; margin-bottom: 2px; }
.cmd.high { padding-top: 6px; }
.cmd.high .caret { margin-top: 12px; }
.cmd.last { border-right: 1px solid #bcc0c4; }
.cmd.off { color: #9b9da0; }

/* Work area */
.workspace {
  position: relative;
  flex: 1;
  min-height: 0;
  display: grid;
  grid-template: 22px 1fr / 247px 1fr;
  background: #fff;
}
.command-tabs {
  grid-column: 1 / 3;
  display: grid;
  grid-template-columns: 67px 56px 56px 62px 84px 133px 63px 56px 56px 117px 118px;
  background: #fff;
}
.command-tabs button {
  background: #abadb0;
  border-right: 1px solid #868686;
  border-bottom: 1px solid #868686;
  color: #222;
  white-space: nowrap;
}
.command-tabs .active { background: #d7dadf; font-weight: 600; border-bottom-color: #d7dadf; }

.manager {
  min-height: 0;
  display: flex;
  flex-direction: column;
  background: #d7dadf;
  border-right: 1px solid #868686;
}
.grip {
  height: 16px;
  flex: none;
  margin: 2px 2px 4px 0;
  display: flex;
  align-items: center;
  justify-content: center;
  border: solid #76809a;
  border-width: 1px 0;
}
.manager-tabs { height: 26px; flex: none; display: flex; border-bottom: 1px solid #aaa; }
.manager-tabs button {
  width: 40px;
  display: flex;
  align-items: center;
  justify-content: center;
  background: #abadb0;
  border: 1px solid #868686;
  border-left: 0;
}
.manager-tabs .active { background: #d7dadf; border-bottom: 0; }
.more { width: 12px; height: 12px; margin: 6px 4px 0 auto; color: #666; }
.filter {
  height: 25px;
  flex: none;
  display: flex;
  margin: 0 3px 1px;
  background: #f0f0f0;
  border: 1px solid #bbb;
}
.filter button { display: flex; align-items: center; }
.filter input { flex: 1; min-width: 0; border: 0; background: none; }
.tree-wrap { flex: 1; min-height: 0; display: flex; }

.tree { flex: 1; min-width: 0; overflow: hidden; }
.tree li { height: 22px; display: flex; align-items: center; padding-left: 3px; white-space: nowrap; }
.tree li.root { padding-left: 0; }
.tree .toggle { width: 21px; flex: none; display: flex; padding-left: 3px; }
.tree .toggle svg { width: 8px; height: 8px; }
.tree .icon { width: 20px; height: 20px; flex: none; margin-right: 4px; }
.tree .root .icon { margin-right: 5px; }

.vscroll {
  width: 15px;
  flex: none;
  display: flex;
  flex-direction: column;
  align-items: center;
  justify-content: space-between;
  background: #f1f1f1;
  color: #555;
}
.vscroll svg { width: 10px; height: 17px; flex: none; }
.vscroll .thumb { width: 100%; height: 405px; margin-bottom: auto; background: #cbcbcb; }
.manager .vscroll { margin-right: 1px; border-left: 1px solid #fff; }

.viewport { position: relative; min-width: 0; min-height: 0; background: #fff; }
.scene { display: block; width: 100%; height: 100%; }
.axis { font-size: 9px; }
.axis-x { fill: #d22; }
.axis-y { fill: #1d7a1d; }
.axis-z { fill: #1530c0; }
.splitter {
  position: absolute;
  left: -1px;
  top: 261px;
  width: 10px;
  height: 39px;
  display: flex;
  align-items: center;
  justify-content: center;
  background: #d7dadf;
  border: 1px solid #868686;
  border-left: 0;
}
.taskpane { position: absolute; top: 28px; right: 0; flex-direction: column; border: 1px solid #868686; border-right: 0; }
.taskpane .btn { width: 25px; height: 24px; background: #abadb0; border-bottom: 1px solid #868686; }
.taskpane .btn:nth-child(2) { background: #d7dadf; }
.taskpane .btn:last-child { border-bottom: 0; }
.view-tools { position: absolute; top: 2px; left: 243px; right: 0; justify-content: center; pointer-events: none; }
.view-tools .drop { width: 14px; }
.view-tools .caret { color: #888; }
.doc-controls { position: absolute; top: 2px; right: 6px; color: #999; }

/* Motion study toolbar */
.motion-bar {
  height: 28px;
  flex: none;
  display: flex;
  align-items: center;
  padding-left: 4px;
  border-top: 1px solid #e4e6f0;
}
.motion-bar .btn { width: 27px; }
.combo { display: flex; align-items: center; border: 1px solid #999; color: #555; }
.combo svg { width: 10px; height: 10px; flex: none; margin-right: 4px; }
.combo select { flex: 1; appearance: none; border: 0; padding: 0 3px; background: none; color: #222; }
.type { width: 116px; height: 21px; background: #dfe0e2; }
.speed { width: 80px; height: 22px; align-self: flex-start; background: #fff; border-color: #777; }
.speed input { width: 13px; height: 14px; padding: 0; margin: 0 auto 0 5px; border: 0; background: #3399ff; color: #fff; }
.sep { width: 1px; height: 21px; margin: 0 4px; background: #8b8d90; }
.sep.tight { margin-left: 2px; }
.time { appearance: none; width: 184px; height: 20px; margin: 0 8px 0 9px; background: none; }
.time::-webkit-slider-runnable-track { height: 3px; background: #e6e8ec; }
.time::-webkit-slider-thumb {
  appearance: none;
  width: 11px;
  height: 19px;
  margin-top: -8px;
  background: #0078d7;
  clip-path: polygon(0 0, 100% 0, 100% 70%, 50% 100%, 0 70%);
}
.collapse { width: 12px; height: 12px; margin: 0 10px 0 auto; color: #666; }
.collapse svg { display: block; width: 12px; height: 12px; }

/* Motion study body */
.motion { height: 253px; flex: none; display: grid; grid-template-columns: 233px 5px 1fr; padding-right: 2px; }
.motion-left { min-width: 0; display: flex; flex-direction: column; padding-left: 3px; }
.filters { height: 30px; padding: 0 0 4px 95px; background: #cbcbcb; }
.filters .btn { width: 27px; }
.motion-tree { height: 206px; display: flex; }
.motion-tree .thumb { height: 70px; }
.motion-tree .tree { padding-top: 1px; }
.motion-tree .tree li { padding-left: 29px; }
.motion-tree .tree li.root { padding-left: 7px; }
.motion-tree .selected .name { background: #fff; border: 1px solid #777; }
.motion-foot { flex: 1; background: #cbcbcb; }
.divider { border: solid #4c5878; border-width: 0 1px; margin: 0 1px; background: #eceef2; }

.timeline { position: relative; min-width: 0; display: flex; flex-direction: column; }
.ruler { height: 30px; padding: 0 3px 0 50px; background: #cbcbcb; }
.seconds, .gridlines, .row { display: grid; grid-template-columns: repeat(213, minmax(0, 1fr)); }
.seconds { height: 30px; }
.second {
  position: relative;
  grid-column: span 10;
  display: grid;
  grid-template-columns: repeat(10, 1fr);
  align-items: end;
  padding-bottom: 1px;
  overflow: hidden;
  white-space: nowrap;
}
.second.part { grid-column: span 3; grid-template-columns: repeat(3, 1fr); }
.second.played { background: repeating-linear-gradient(135deg, #ffff80 0 6px, #e3e37c 6px 7px); }
.second b { position: absolute; left: 3px; top: 2px; font-size: 11px; font-weight: 600; color: #5c5c5c; }
.second i { height: 8px; border-left: 1px solid #666; }
.second i:nth-of-type(6) { height: 12px; }
.second i:first-of-type { height: 26px; }

.tracks { position: relative; height: 206px; padding: 1px 3px 0 50px; overflow: hidden; }
.gridlines { position: absolute; inset: 1px 3px 0 50px; }
.gridlines i { grid-column: span 10; border-left: 1px solid #bdbfc2; }
.gridlines i:last-child { grid-column: span 3; }
.row { position: relative; height: 22px; align-items: center; }
.row > * { grid-row: 1; }
.bar { grid-column: 1 / span 100; }
.bar.total { height: 1px; background: #000; }
.bar.drive { height: 15px; background: #cdab4b; }
.bar.move { height: 5px; align-self: start; margin-top: 3px; background: #ff0; }
.key { width: 10px; height: 16px; z-index: 2; grid-column: 1; justify-self: start; margin-left: -5px; }
.key.end { grid-column: 91 / span 10; justify-self: end; margin-right: -5px; }
.playhead { position: absolute; left: 49px; top: 0; width: 2px; height: 236px; background: #888; z-index: 3; }
.zoom-tools { position: absolute; right: 0; bottom: 0; background: #cbcbcb; }
.zoom-tools .btn { width: 27px; }
.hscroll { height: 17px; display: flex; align-items: center; background: #f1f1f1; border-top: 1px solid #fff; border-bottom: 1px solid #fff; color: #444; }
.hscroll svg { width: 12px; height: 12px; margin: 0 3px; }
.hscroll .thumb { width: 89%; height: 15px; margin-right: auto; background: #cbcbcb; }

/* Bottom tabs */
.study-tabs {
  position: relative;
  height: 17px;
  flex: none;
  display: grid;
  grid-template-columns: 64px 58px 67px 82px 108px;
  padding-left: 27px;
  border-top: 1px solid #868686;
  border-bottom: 1px solid #868686;
}
.steps { display: grid; grid-template-columns: repeat(4, 1fr); background: #b4b6b9; border-top: 1px solid #222; }
.steps button { display: flex; align-items: center; justify-content: center; border: 1px solid #999; color: #8a8c8f; }
.steps svg { width: 10px; height: 10px; }
.tab { line-height: 14px; background: #abadb0; border-right: 1px solid #868686; color: #222; white-space: nowrap; }
.tab.active { background: #d7dadf; font-weight: 700; color: #000; }
.callout { position: absolute; left: 203px; top: -7px; width: 110px; height: 37px; border: 3px solid #ee4e43; z-index: 3; }
.mouse { position: absolute; left: 275px; top: 9px; width: 20px; height: 20px; z-index: 4; }

.status {
  height: 17px;
  flex: none;
  display: flex;
  align-items: center;
  padding: 2px 8px 0 1px;
  white-space: nowrap;
  font-size: 11px;
  line-height: 15px;
}
.edition { margin-right: auto; }
.status span + span { margin-left: 18px; }
.light { width: 18px; height: 15px; margin: 0 30px 0 22px; }
.status button { display: flex; align-items: center; gap: 17px; }
.tag { width: 18px; height: 15px; margin-left: 65px; }
```

FILE: script.js
```js
// Small SVG helper
function use(id, cls) {
  return `<svg class="${cls}"><use href="#${id}"/></svg>`;
}

// Icon rows: "v" is a drop-down arrow, "|" a separator, "*" marks a pressed button
document.querySelectorAll('[data-icons]').forEach(function (bar) {
  bar.innerHTML = bar.dataset.icons.split(' ').map(function (name) {
    if (name === 'v') return `<button class="drop" aria-label="More">${use('caret', 'caret')}</button>`;
    if (name === '|') return '<i class="sep"></i>';
    const on = name.endsWith('*') ? ' on' : '';
    const id = name.replace('*', '');
    return `<button class="btn${on}" aria-label="${id}">${use(id, 'icon')}</button>`;
  }).join('');
});

// Ribbon commands: icon, lines of the label, extra classes
const commands = [
  ['study', 'Design|Study', 'high last'],
  ['interf', 'Interference|Detection'],
  ['clear', 'Clearance|Verification'],
  ['hole', 'Hole|Alignment'],
  ['tape', 'Measure'],
  ['scale', 'Mass|Properties'],
  ['section', 'Section|Properties'],
  ['gauge', 'Sensor'],
  ['visual', 'Assembly|Visualization', 'off'],
  ['perf', 'Performance|Evaluation', 'last'],
  ['curv', 'Curvature'],
  ['symm', 'Symmetry|Check', 'last'],
  ['compare', 'Compare|Documents'],
  ['check', 'Check Active|Document', 'high last'],
  ['simx', 'SimulationXpress|Analysis Wizard'],
  ['flox', 'FloXpress|Analysis|Wizard'],
  ['drive', 'DriveWorksXpress|Wizard'],
  ['cost', 'Costing'],
  ['sust', 'Sustainability']
];
document.getElementById('ribbon').innerHTML = commands.map(function (c) {
  const cls = c[2] || '';
  const more = cls.includes('high') ? use('caret', 'caret') : '';
  return `<button class="cmd ${cls}">${use(c[0], 'icon')}<span>${c[1].replace(/\|/g, '<br>')}</span>${more}</button>`;
}).join('');

// Trees: icon, name, arrow, class
function fillTree(id, items) {
  const list = document.getElementById(id);
  items.forEach(function (item) {
    const li = document.createElement('li');
    li.className = item[3] || '';
    const noToggle = id === 'featureTree' && li.className === 'root';
    if (!noToggle) li.innerHTML = `<span class="toggle">${item[2] ? use(item[2], '') : ''}</span>`;
    li.innerHTML += use(item[0], 'icon');
    const name = document.createElement('span');
    name.className = 'name';
    name.textContent = item[1];
    li.appendChild(name);
    list.appendChild(li);
  });
}

fillTree('featureTree', [
  ['machine', 'machine\u00a0 (Default)', '', 'root'],
  ['history', 'History'],
  ['binder', 'Design Binder', 'tri'],
  ['annot', 'Annotations', 'tri'],
  ['sensorf', 'Sensors'],
  ['plane', 'Front'],
  ['plane', 'Top'],
  ['plane', 'Right'],
  ['origin', 'Origin'],
  ['part', 'Plates<2> (Ends)', 'tri'],
  ['part', '(-) Plates<3> (Side with cut)', 'tri'],
  ['part', '(-) Plates<4> (Ends)', 'tri'],
  ['part', '(-) Plates<5> (Sides)', 'tri'],
  ['part', '(-) Plates<6> (Sides)', 'tri'],
  ['part', '(-) Plates<7> (Side with cut)', 'tri'],
  ['part', 'Base<2> (Default)', 'tri'],
  ['part', 'Mount<1> (Default)', 'tri'],
  ['part', '(-) Wheel<1> (Default)', 'tri'],
  ['part', '(-) Linkage<1> (Default)', 'tri'],
  ['part', '(-) HingePin<1> (Default)', 'tri'],
  ['part', '(-) HingePin<2> (Default)', 'tri'],
  ['part', '(-) HingePin<3> (Default)', 'tri'],
  ['part', '(-) HingePin<4> (Default)', 'tri']
]);

fillTree('motionTree', [
  ['assembly', 'machine\u00a0 (Default)', 'caret', 'root'],
  ['camera', 'Orientation and Camera Views'],
  ['pvlight', 'PhotoView 360 Lights', 'tri'],
  ['swlight', 'SOLIDWORKS Lights', 'tri'],
  ['motor', 'RotaryMotor2'],
  ['part', '(-) Plates<2> (Ends)', 'tri'],
  ['part', '(-) Plates<3> (Side with cut)', 'tri'],
  ['part', '(-) Plates<4> (Ends)', 'tri'],
  ['part', '(-) Plates<5> (Sides)', 'tri'],
  ['part', '(-) Plates<6> (Sides)', 'tri', 'selected']
]);

// Ruler: 21.3 seconds, the first ten belong to the study
let ruler = '';
let lines = '';
for (let s = 0; s <= 21; s++) {
  const cls = (s < 10 ? ' played' : '') + (s === 21 ? ' part' : '');
  ruler += `<div class="second${cls}"><b>${s} sec</b>${'<i></i>'.repeat(s === 21 ? 3 : 10)}</div>`;
  lines += '<i></i>';
}
document.getElementById('seconds').innerHTML = ruler;
document.getElementById('gridlines').innerHTML = lines;

// Tracks: bar type, key colour, end key
function key(color, cls) {
  return `<svg class="key ${cls}" viewBox="0 0 10 16"><path d="M5 0l5 8-5 8-5-8z" fill="${color}" stroke="#000" stroke-width="${color === '#999' ? 0 : 1}"/></svg>`;
}
const rows = [
  ['total', '#000', true], ['', '#000'], ['', ''], ['', '#999'], ['drive', '#00f'],
  ['', '#00f'], ['move', '#00f'], ['move', '#00f'], ['move', '#00f'], ['move', '#00f']
];
document.getElementById('rows').innerHTML = rows.map(function (r) {
  return '<div class="row">' +
    (r[0] ? `<i class="bar ${r[0]}"></i>` : '') +
    (r[1] ? key(r[1], '') : '') +
    (r[2] ? key(r[1], 'end') : '') +
    '</div>';
}).join('');
```
